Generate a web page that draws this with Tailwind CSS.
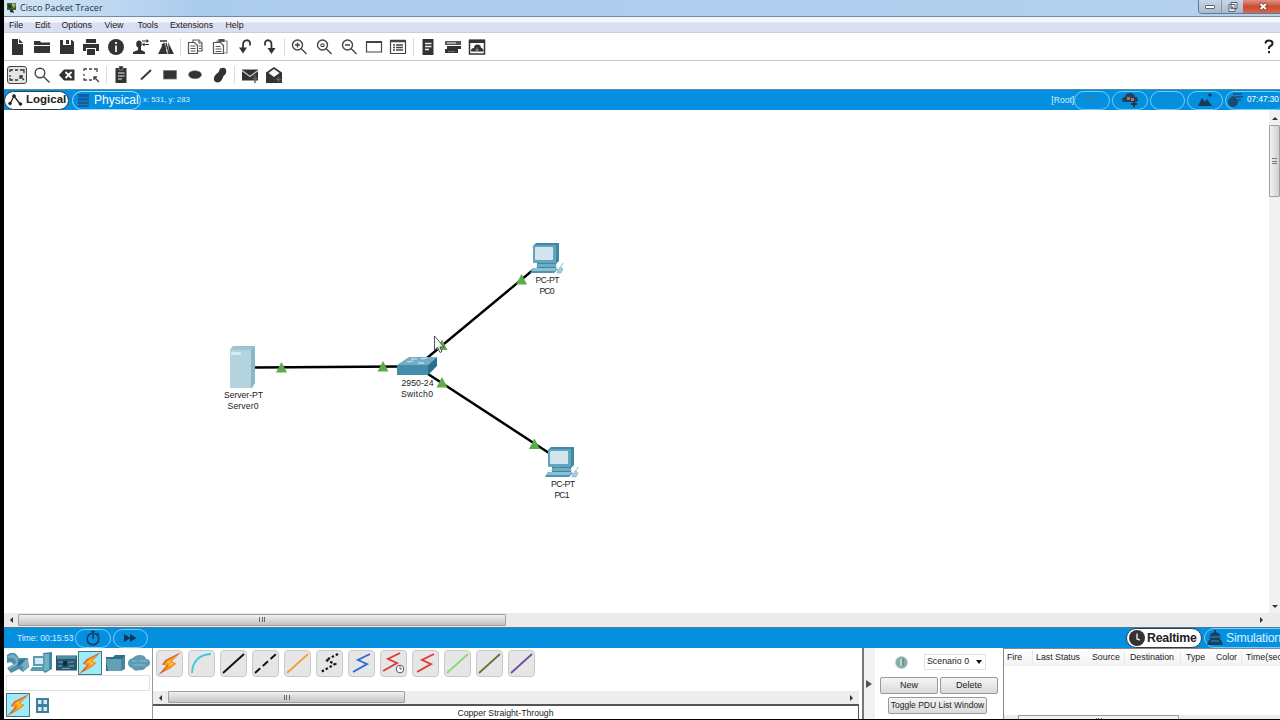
<!DOCTYPE html>
<html lang="en">
<head>
  <meta charset="UTF-8" />
  <title>Cisco Packet Tracer</title>
  <script src="https://cdn.jsdelivr.net/npm/@tailwindcss/browser@4"></script>
</head>
<body class="w-[1280px] h-[720px] overflow-hidden bg-black pl-[4px] font-['Liberation_Sans',Arial,sans-serif] text-[9px] text-[#222]">
  <!-- shared symbols -->
  <svg class="hidden">
    <symbol id="bolt" viewBox="0 0 24 24">
      <path d="M24 0 8 8l-4 5 5 1-9 10 13-7 6-5-5-2z" fill="#d9622b" />
      <path d="M20 3 9 9l-3 4 5 1-5 6 8-4 5-4-5-2z" fill="#fb9a1c" />
      <path d="m14 8-5 3 4 1-2 3 5-3-4-1z" fill="#ffd33d" />
    </symbol>
    <symbol id="pc" viewBox="0 0 34 34">
      <path d="M4 2 6 0h23v18l-3 3z" fill="#3f88a5" />
      <rect x="3" y="2" width="23" height="18" rx="1" fill="#62a5be" />
      <rect x="5" y="4" width="18" height="13" rx="1" fill="#d3e4ed" />
      <path d="M7 20h19v5H7z" fill="#3e86a3" />
      <path d="M8 21h17l2 3H6z" fill="#6caec5" />
      <path d="M3 25h23l2 1-4 4H0z" fill="#4e93b0" />
      <path d="M4 25h23l-2 3H1z" fill="#8bbfd2" />
      <path d="M29 25q4-3 4-5M28 27l3-3 2 2-2 4h-4z" fill="#a9cbd9" stroke="#8fb9cb" stroke-width=".8" />
    </symbol>
  </svg>

  <div class="flex flex-col h-[719px] bg-white">
    <!-- title bar -->
    <header class="flex h-[17px] shrink-0 items-center border-b border-[#6f8bab] bg-linear-to-r from-[#d3e6f6] via-[#acccee] via-15% to-[#b4d0ee]">
      <svg class="ml-[3px] mb-[1px] size-[11px]" viewBox="0 0 11 11"><path d="M0 1h9v7H0z" fill="#445c3c" /><path d="m1 2 4 2-3 3z" fill="#172b1b" /><path d="m5 1 4 1-2 4-2-2z" fill="#a5b34d" /><path d="m3 7 3 1 1 3-4-1z" fill="#223a2a" /></svg>
      <span class="ml-[2px] mb-[1px] flex-1 font-['Open_Sans','Noto_Sans',sans-serif] text-[9.200px] leading-[14px] text-[#26313d]">Cisco Packet Tracer</span>
      <div class="-mr-[4px] flex h-[14px] self-start overflow-hidden rounded-bl border border-t-0 border-[#66788e]">
        <div class="flex w-[23px] items-center justify-center border-r border-[#8795a8] bg-linear-to-b from-[#c9d5e3] to-[#a9bacf]"><span class="mt-[1px] h-[4px] w-[10px] rounded-[1px] border border-[#5c6775] bg-white"></span></div>
        <div class="flex w-[21px] items-center justify-center bg-linear-to-b from-[#c9d5e3] to-[#a9bacf]">
          <svg class="size-[10px]" viewBox="0 0 10 10" fill="#f5f7fa" stroke="#566172"><path d="M3 .5h6v6H3zM1 2.500h6v7H1z" /><path d="M3 5h2v2H3z" /></svg>
        </div>
        <div class="flex w-[40px] items-center justify-center bg-linear-to-b from-[#dc9484] via-[#ca4a32] via-50% to-[#d56a4b]">
          <svg class="size-[9px]" viewBox="0 0 9 9"><path d="m1 1.500 6.500 6M7.500 1.500 1 7.500" stroke="#7a4238" stroke-width="3.200" /><path d="m1.500 2 5.500 5M7 2 1.500 7" stroke="#fff" stroke-width="1.800" /></svg>
        </div>
      </div>
    </header>

    <!-- menu -->
    <nav class="flex h-[16px] shrink-0 items-center border-b border-[#cfcbd8] bg-linear-to-b from-[#f4f5fb] from-35% to-[#d9def0] to-40% pl-[5px] text-[8.800px] leading-[14px] text-[#1c1c24]">
      <span class="w-[26px]">File</span>
      <span class="w-[26.500px]">Edit</span>
      <span class="w-[43px]">Options</span>
      <span class="w-[33px]">View</span>
      <span class="w-[32.500px]">Tools</span>
      <span class="w-[55.500px]">Extensions</span>
      <span>Help</span>
    </nav>

    <!-- main toolbar -->
    <div class="flex h-[28px] shrink-0 items-center border-b border-[#c8c8c8] pl-[.6px] text-[#333]">
      <div class="grid w-[24.800px] place-items-center"><svg class="size-[18px]" viewBox="0 0 18 18" fill="currentColor"><path d="M4 1h6v5h5v11H4zM11 1l4 4h-4z" /></svg></div>
      <div class="grid w-[24.800px] place-items-center"><svg class="size-[18px]" viewBox="0 0 18 18" fill="currentColor"><path d="M1 3h6l1 1.500h9V7H1zM1 8h16v7H1z" /></svg></div>
      <div class="grid w-[24.800px] place-items-center"><svg class="size-[18px]" viewBox="0 0 18 18" fill="currentColor"><path d="M2 2h3v5h8V2h1l2 2v12H2zM8 2h3v4H8z" /></svg></div>
      <div class="grid w-[24.800px] place-items-center"><svg class="size-[18px]" viewBox="0 0 18 18" fill="currentColor"><path d="M4 1h10v4H4zM1 6h16v7h-3v-3H4v3H1zM5 11h8v6H5z" /></svg></div>
      <div class="grid w-[24.800px] place-items-center"><svg class="size-[18px]" viewBox="0 0 18 18"><circle cx="9" cy="9" r="8" fill="#333" /><path d="M8 4h2v2H8zM8 7.500h2V14H8z" fill="#ddd" /></svg></div>
      <div class="grid w-[24.800px] place-items-center"><svg class="size-[18px]" viewBox="0 0 18 18" fill="currentColor"><ellipse cx="7" cy="6" rx="2.800" ry="3.600" /><path d="M6 8h3v4l4 2v2H1v-2l5-2z" /><path d="M10 3h6M11 6.500h6" stroke="currentColor" stroke-width="1" /><path d="m14.500 1 2.500 2-2.500 2zM12.500 4.500l-2.500 2 2.500 2z" /></svg></div>
      <div class="grid w-[24.800px] place-items-center"><svg class="size-[18px]" viewBox="0 0 18 18" fill="currentColor"><path d="M7 4 1 16h8V9zM11 4l6 12h-5z" /><path d="M3 3h7M9 5l3 11M5 6l5 10" stroke="currentColor" stroke-width="1.400" /><path d="M9 9l2 6" stroke="#aaa" /></svg></div>
      <div class="mx-[1.850px] h-[18px] w-px bg-[#dcdcdc]"></div>
      <div class="grid w-[24.800px] place-items-center"><svg class="size-[18px]" viewBox="0 0 18 18" fill="#fff" stroke="#555" stroke-width="1.200"><path d="M7 2h6l3 3v8H7z" /><path d="M2.500 4.500h6l3 3v8h-9z" /><path d="M4.500 8h5M4.500 10.500h5M4.500 13h5M13 2v3h3M13 8h2M13 10.500h2" /></svg></div>
      <div class="grid w-[24.800px] place-items-center"><svg class="size-[18px]" viewBox="0 0 18 18" fill="#fff" stroke="#555" stroke-width="1.200"><path d="M6 3h10v12H6z" stroke="#888" /><path d="M2.500 4.500h7l3 3v8h-10z" /><path d="M4.500 8.500h5M4.500 11h6M4.500 13.500h6" /><path d="M8 1.500h5v2H8z" fill="#555" /></svg></div>
      <div class="grid w-[24.800px] place-items-center"><svg class="size-[18px]" viewBox="0 0 18 18"><path d="M7 11V7c0-3 1.500-4.500 3.500-4.700C13 2 15 4 13.800 7.500" fill="none" stroke="#333" stroke-width="1.800" /><path d="M3 9.500h8l-4 6z" fill="#333" /></svg></div>
      <div class="grid w-[24.800px] place-items-center"><svg class="size-[18px]" viewBox="0 0 18 18"><path d="M4.200 7.500C3 4 5 2 7.500 2.300 9.500 2.500 10.500 4.500 10.500 7v4" fill="none" stroke="#333" stroke-width="1.800" /><path d="M6.500 10h8l-4 6z" fill="#333" /></svg></div>
      <div class="mx-[1.850px] h-[18px] w-px bg-[#dcdcdc]"></div>
      <div class="grid w-[24.800px] place-items-center"><svg class="size-[18px]" viewBox="0 0 18 18" fill="none" stroke="#444" stroke-width="1.400"><circle cx="7.500" cy="7" r="5" /><path d="m11 10.500 5.500 5.500M5 7h5M7.500 4.500v5" /></svg></div>
      <div class="grid w-[24.800px] place-items-center"><svg class="size-[18px]" viewBox="0 0 18 18" fill="none" stroke="#444" stroke-width="1.400"><circle cx="7.500" cy="7" r="5" /><path d="m11 10.500 5.500 5.500" /><path d="M6 6h3v2.500H6z" stroke-width="1" /></svg></div>
      <div class="grid w-[24.800px] place-items-center"><svg class="size-[18px]" viewBox="0 0 18 18" fill="none" stroke="#444" stroke-width="1.400"><circle cx="7.500" cy="7" r="5" /><path d="m11 10.500 5.500 5.500M5 7h5" /></svg></div>
      <div class="grid w-[24.800px] place-items-center"><svg class="size-[18px]" viewBox="0 0 18 18" fill="none" stroke="#444" stroke-width="1.200"><path d="M1.500 4h15v10h-15z" /><path d="M1 4h16" stroke-width="2" /></svg></div>
      <div class="grid w-[24.800px] place-items-center"><svg class="size-[18px]" viewBox="0 0 18 18" fill="none" stroke="#444" stroke-width="1.200"><path d="M1.500 3h15v12.500h-15z" /><path d="M1 3h16" stroke-width="2.500" /><path d="M4 7h2M7 7h7M4 9.500h2M7 9.500h7M4 12h2M7 12h7" stroke-width="1.500" /></svg></div>
      <div class="mx-[1.850px] h-[18px] w-px bg-[#dcdcdc]"></div>
      <div class="grid w-[24.800px] place-items-center"><svg class="size-[18px]" viewBox="0 0 18 18"><path d="M3.500 1h11v16h-11z" fill="#333" /><path d="M6 5.500h6.500M6 8.500h6.500M6 11.500h4" stroke="#eee" stroke-width="1.300" /></svg></div>
      <div class="grid w-[24.800px] place-items-center"><svg class="size-[18px]" viewBox="0 0 18 18"><path d="M1 3h16v4H1z" fill="#555" /><path d="M3 8h14v3H3zM1 11h13v4H1z" fill="#333" /><path d="M3 5h9" stroke="#ddd" stroke-width="1.200" /><path d="M4 13.500h7" stroke="#888" stroke-width=".7" /></svg></div>
      <div class="grid w-[24.800px] place-items-center"><svg class="size-[18px]" viewBox="0 0 18 18"><path d="M1.500 2.500h15v13.500h-15z" fill="#fff" stroke="#333" stroke-width="1.500" /><path d="M1 1.500h16V5H1zM3 13.500Q2.500 10 6 10q0-3.500 3.500-3.500T13 10q2.500 0 2.500 3.500z" fill="#333" /><path d="M9 9.500v3.500M7.500 11.500 9 13l1.500-1.500" stroke="#999" fill="none" /></svg></div>
      <svg class="mr-[6px] ml-auto h-[15px] w-[10px]" viewBox="0 0 10 15"><path d="M1.500 4.500Q1.500 1.500 5 1.500T8.500 4.500Q8.500 6 6.500 7T5 10" fill="none" stroke="#222" stroke-width="2" /><path d="M4 12h2v2.200H4z" fill="#222" /></svg>
    </div>

    <!-- drawing toolbar -->
    <div class="flex h-[28px] shrink-0 items-center pl-[.6px] text-[#333]">
      <div class="grid w-[24.800px] place-items-center"><svg class="h-[18px] w-[20px] rounded-[3px] border border-[#444] bg-[#e4e4e4]" viewBox="0 0 18 16" fill="none" stroke="#333" stroke-width="1.300"><path d="M2 5V3h3M7 3h3M12 3h4v3M2 8v2M2 11v2h3M7 13h3M16 13l-4-4M12 12V9h3" /></svg></div>
      <div class="grid w-[24.800px] place-items-center"><svg class="size-[18px]" viewBox="0 0 18 18" fill="none" stroke="#444" stroke-width="1.400"><circle cx="7" cy="7" r="4.800" /><path d="m10.500 10.500 6 6" /></svg></div>
      <div class="grid w-[24.800px] place-items-center"><svg class="size-[18px]" viewBox="0 0 18 18"><path d="m1 9 5-5.500h10.500v11H6z" fill="#333" /><path d="m7.500 6 6 6m0-6-6 6" stroke="#fff" stroke-width="1.800" /></svg></div>
      <div class="grid w-[24.800px] place-items-center"><svg class="size-[18px]" viewBox="0 0 18 18" fill="none" stroke="#444" stroke-width="1.300"><path d="M2 5V3h3M7 3h3M12 3h3v3M2 8v2M2 12v2h3M7 14h3M17 16l-5-5M12 14v-3h3" /></svg></div>
      <div class="mx-[1.850px] h-[18px] w-px bg-[#dcdcdc]"></div>
      <div class="grid w-[24.800px] place-items-center"><svg class="size-[18px]" viewBox="0 0 18 18"><path d="M3.500 2h11v15h-11z" fill="#333" /><path d="M7 0h4v4H7z" fill="#333" stroke="#aaa" stroke-width=".6" /><path d="M6 7h6.500M6 10h6.500M6 13h4" stroke="#eee" stroke-width="1.200" /></svg></div>
      <div class="grid w-[24.800px] place-items-center"><svg class="size-[18px]" viewBox="0 0 18 18"><path d="M4 13.500 14 4" stroke="#333" stroke-width="1.800" /></svg></div>
      <div class="grid w-[24.800px] place-items-center"><svg class="size-[18px]" viewBox="0 0 18 18"><path d="M2.500 4.500h13v8.500h-13z" fill="#333" stroke="#777" stroke-width=".8" /></svg></div>
      <div class="grid w-[24.800px] place-items-center"><svg class="size-[18px]" viewBox="0 0 18 18"><ellipse cx="9" cy="8.700" rx="6.500" ry="4" fill="#333" stroke="#777" stroke-width=".6" /></svg></div>
      <div class="grid w-[24.800px] place-items-center"><svg class="size-[18px]" viewBox="0 0 18 18"><path d="M9 2.500q5-2 6 1 1 4-2 6-1 1-1.500 3-1.500 4-5.500 4-4-1-3-5 1-3 3-4 2-1 3-5z" fill="#333" /></svg></div>
      <div class="mx-[1.850px] h-[18px] w-px bg-[#dcdcdc]"></div>
      <div class="grid w-[24.800px] place-items-center"><svg class="size-[18px]" viewBox="0 0 18 18"><path d="M1 3.500h16v11H1z" fill="#333" /><path d="m1 4.500 8 6 8-6" fill="none" stroke="#ccc" stroke-width="1.200" /><path d="M14 9v8M11.500 12.500h5" stroke="#666" stroke-width="1.500" /></svg></div>
      <div class="grid w-[24.800px] place-items-center"><svg class="size-[18px]" viewBox="0 0 18 18"><path d="m9 1 8 5.500V17H1V6.500z" fill="#333" /><path d="m9 3 5.500 4L9 11 3.500 7z" fill="#f6f6f6" /><path d="M13.500 11v5M11 13.500h5" stroke="#666" stroke-width="1.300" /></svg></div>
    </div>

    <!-- workspace bar -->
    <div class="flex h-[21px] shrink-0 items-center border-t border-[#4f8cae] bg-[#0590df] text-[8.200px] text-white">
      <div class="flex h-[19px] w-[65px] items-center rounded-full border border-[#2d3e4a] bg-white text-[11.500px] font-bold text-[#222]">
        <svg class="mr-[3px] ml-[2px] size-[16px] shrink-0" viewBox="0 0 16 16" fill="#222" stroke="#222"><path d="m3 12 4-8 6 8" fill="none" stroke-width="1.300" /><circle cx="3" cy="11.500" r="1.300" /><circle cx="7" cy="4" r="1.300" /><circle cx="13.500" cy="12" r="1.300" /></svg>
        <span>Logical</span>
      </div>
      <div class="ml-[3px] flex h-[19px] w-[69px] items-center rounded-full border border-[#9ddcff] text-[12px]">
        <svg class="ml-[4px] mr-[4px] size-[13px] shrink-0" viewBox="0 0 13 13"><path d="M1 0h11v13H1z" fill="#145f9b" /><path d="M1 3.500h11M1 7h11M1 10.500h11" stroke="#0a85cc" /></svg>
        <span>Physical</span>
      </div>
      <span class="ml-[2px] text-[7.800px] text-[#d4efff]">x: 531, y: 283</span>
      <span class="ml-auto text-[8.600px] text-[#d4efff]">[Root]</span>
      <div class="flex gap-[2px]">
        <div class="grid h-[19px] w-[35.700px] place-items-center rounded-full border border-[#73cdfb]"><svg class="h-[12px] w-[16px]" viewBox="0 0 16 12"><path d="M1 3.500 4 1v5zM4 3.500h7q2 0 2 3v3" stroke="#477fa4" fill="none" /></svg></div>
        <div class="grid h-[19px] w-[35.700px] place-items-center rounded-full border border-[#73cdfb]"><svg class="h-[14px] w-[16px]" viewBox="0 0 16 14"><path d="M0 7q0-3 3-3 1-4 5-4t5 4q3 0 3 3 0 2-2 2H2q-2 0-2-2z" fill="#283d4f" /><path d="M5 4h3v3H5zM9 5h3v3H9z" fill="#9a7778" /><path d="M12 8v6M9 11h6" stroke="#263340" stroke-width="2" /></svg></div>
        <div class="grid h-[19px] w-[35.700px] place-items-center rounded-full border border-[#73cdfb]"><svg class="size-[12px]" viewBox="0 0 12 12"><path d="M1 3h3M8 3h3M5 6h2M1 9h3M8 9h3" stroke="#297fae" /></svg></div>
        <div class="grid h-[19px] w-[35.700px] place-items-center rounded-full border border-[#73cdfb]"><svg class="h-[14px] w-[16px]" viewBox="0 0 16 14"><path d="m1 13 4-8 3 4 2-3 5 7z" fill="#193a56" /><circle cx="13" cy="2" r="1.800" fill="#193a56" /></svg></div>
        <div class="-mr-[6px] flex h-[19px] w-[61px] items-center rounded-full border border-[#73cdfb]"><svg class="ml-[1px] mr-[4px] size-[16px] shrink-0" viewBox="0 0 16 16"><circle cx="6" cy="10" r="5" fill="#1b4c70" /><path d="M4 5h12M6 2h9M11 8h3" stroke="#1b4c70" stroke-width="1.700" /></svg><span>07:47:30</span></div>
      </div>
    </div>

    <!-- logical workspace -->
    <div class="flex h-[503px] shrink-0">
      <svg class="h-[503px] w-[1265px]" viewBox="4 110 1265 503" font-family="Liberation Sans, Arial, sans-serif" font-size="8.700" text-anchor="middle" fill="#222">
        <g stroke="#000" stroke-width="2.400">
          <path d="M255 367.500 400 366.500M427 358 533 270M428 374 549 453" />
        </g>
        <!-- server -->
        <path d="M230 350l3-4h22v37l-3 5h-22z" fill="#8ab7ca" />
        <path d="M230 350h21v38h-21z" fill="#b3d3df" /><path d="m230 350 3-3.500h22l-4 3.500z" fill="#9fc5d4" /><path d="M231 352h10v3h-10z" fill="#d8eaf1" />
        <!-- switch -->
        <path d="M397 365h31v10h-31z" fill="#438cac" /><path d="m397 365 12-8h28l-9 8z" fill="#75aec4" /><path d="m428 365 9-8v9l-9 9z" fill="#286f90" /><path d="m407 362 6-1m-2-2h6m1 4h6m-3-4 6-1" stroke="#d6edf5" />
        <use href="#pc" x="530" y="243" width="34" height="34" />
        <use href="#pc" x="545" y="447" width="34" height="34" />
        <!-- link lights -->
        <path d="m281.500 362 5.500 10.500h-11zM383 361l5.500 10.500h-11zM442 339.500l5.500 10.500h-11zM442 377l5.500 10.500h-11zM521.500 274l5.500 10.500h-11zM534.500 438.500l5.500 10.500h-11z" fill="#5cab4c" />
        <path d="M434.500 336v14l3-2.500 2.500 5 2-1-2-4.500h4z" fill="#fff" fill-opacity=".75" stroke="#444" stroke-width=".9" />
        <text x="243.500" y="397.500" textLength="39">Server-PT</text><text x="243" y="408.500" textLength="31">Server0</text>
        <text x="417.500" y="385.500" textLength="32">2950-24</text><text x="417" y="396.500" textLength="32">Switch0</text>
        <text x="547.500" y="283" textLength="24">PC-PT</text><text x="547" y="294" textLength="15">PC0</text>
        <text x="563" y="486.500" textLength="24">PC-PT</text><text x="562" y="497.500" textLength="15">PC1</text>
      </svg>
      <div class="flex w-[11px] flex-col items-center bg-[#f1f1f1]">
        <svg class="mt-[5px] mb-[4px] h-[6px] w-[6px] shrink-0" viewBox="0 0 6 6"><path d="m0 5 3-3 3 3z" fill="#333" /></svg>
        <div class="grid h-[72px] w-[11px] shrink-0 place-items-center rounded-[1px] border border-[#a0a0a0] bg-linear-to-r from-[#f3f3f3] to-[#cfcfcf]"><div class="h-[6px] w-[5px] border-y border-[#777]"><div class="mt-[1.500px] h-px bg-[#777]"></div></div></div>
        <svg class="mt-auto mb-[4px] h-[6px] w-[6px] shrink-0" viewBox="0 0 6 6"><path d="m0 2 3 3 3-3z" fill="#333" /></svg>
      </div>
    </div>
    <div class="flex h-[14px] shrink-0 items-center bg-[#ebebeb]">
      <svg class="mx-[4px] size-[6px]" viewBox="0 0 6 6"><path d="M5 0v6L2 3z" fill="#333" /></svg>
      <div class="mb-[1px] grid h-[12px] w-[488px] place-items-center rounded-[1px] border border-[#a0a0a0] bg-linear-to-b from-[#f2f2f2] to-[#c0c0c0]"><div class="flex gap-[1.500px]"><i class="h-[5px] w-px bg-[#666]"></i><i class="h-[5px] w-px bg-[#666]"></i><i class="h-[5px] w-px bg-[#666]"></i></div></div>
      <svg class="mr-[15px] ml-auto size-[6px]" viewBox="0 0 6 6"><path d="M1 0v6l3-3z" fill="#333" /></svg>
    </div>

    <!-- time bar -->
    <div class="flex h-[21px] shrink-0 items-center border-t border-[#4f7b96] bg-[#0590df] pl-[13px] text-[#d9f1ff]">
      <span class="w-[58px] text-[8.500px] whitespace-nowrap">Time: 00:15:53</span>
      <div class="grid h-[19px] w-[35.500px] place-items-center rounded-full border border-[#73cdfb]"><svg class="size-[16px]" viewBox="0 0 16 16" fill="none" stroke="#143f60" stroke-width="1.600"><circle cx="8" cy="9" r="5.800" /><path d="M6 1.500h4M8 2v7M12 3l2 2" /></svg></div>
      <div class="ml-[2px] grid h-[19px] w-[35.500px] place-items-center rounded-full border border-[#73cdfb]"><svg class="h-[10px] w-[13px]" viewBox="0 0 13 10" fill="#133752"><path d="m0 1 6.500 4L0 9zM6 1l6.500 4L6 9z" /></svg></div>
      <div class="ml-auto flex h-[20px] w-[76px] items-center rounded-full border border-[#2d3e4a] bg-white text-[12.300px] font-bold text-[#222]"><svg class="mr-[2px] ml-[2px] size-[16px] shrink-0" viewBox="0 0 16 16"><circle cx="8" cy="8" r="8" fill="#333" /><path d="M8 3.500V9l3 1" fill="none" stroke="#ddd" stroke-width="1.500" /></svg><span class="tracking-[-.2px]">Realtime</span></div>
      <div class="-mr-[8px] ml-[2px] flex h-[20px] w-[84px] items-center rounded-full border border-[#73cdfb] text-[12.300px]"><svg class="mr-[3px] ml-[2px] size-[16px] shrink-0" viewBox="0 0 16 16"><circle cx="8" cy="7.500" r="5.500" fill="#18415f" /><path d="M0 15 2 10h12l2 5z" fill="#18415f" /><path d="M3 7h10M4 11h8" stroke="#3c91c0" /><path d="M8 0v3" stroke="#18415f" stroke-width="2" /></svg><span class="tracking-[-.25px]">Simulation</span></div>
    </div>

    <div class="flex h-[71px] shrink-0">
      <!-- device categories -->
      <div class="flex w-[149px] flex-col border-r border-[#999] pt-[3px] pl-[2px]">
        <div class="flex h-[24px] w-[146px]">
          <svg class="size-[24px]" viewBox="0 0 24 24"><path d="M1 4q5-4 9-1l3 4h9l1 9-6 5-4-3-8 4-4-5 7-3-3-3-4 1z" fill="#4d8eaa" /><path d="m2 5 5-2 5 4v5l9-4 1 0v8l-5 4v-5l-6-1-7 4-2-2 8-4q0-6-8-5z" fill="#76afc4" /><path d="m13 9 7-1-5 6-4 1z" fill="#2f7190" /></svg>
          <svg class="size-[24px]" viewBox="0 0 24 24"><path d="m13 2 9-1v17l-7 4-3-3z" fill="#3f87a5" /><path d="M13 3h6v16l-5 1z" fill="#76afc4" /><path d="M3 5h12v10H3z" fill="#5a9db7" /><path d="M5 7h8v6H5z" fill="#d8e8ef" /><path d="M2 16h13l-2 4H0z" fill="#5b9cb5" /></svg>
          <svg class="size-[24px]" viewBox="0 0 24 24"><path d="M2 4.500h21v15H2z" fill="#28566c" /><path d="M3 5h19v3H3z" fill="#4a8dab" /><path d="M4 11h5M4 15h4M14 11h6M15 15h5M8 17.500h8" stroke="#6aa7c0" stroke-width="1.100" /><path d="M9 10h4v5H9z" fill="#132d3b" /></svg>
          <div class="grid size-[24px] place-items-center border border-[#477786] bg-[#9debf7]"><svg class="size-[22px]"><use href="#bolt" /></svg></div>
          <svg class="ml-[1px] size-[24px]" viewBox="0 0 24 24"><path d="M3 6h7l2-2h10v14l-5 2H3z" fill="#2f718c" /><path d="M3 8h15v12H5z" fill="#65a0b6" /><path d="m18 8 4-3v12l-4 3z" fill="#48849c" /></svg>
          <svg class="size-[24px]" viewBox="0 0 24 24"><path d="M6 7q2-3 7-3t6 4q4 0 4 4 0 3-4 4-2 4-7 3-4 2-7-2-4-1-4-5t5-5z" fill="#5d9ab4" /><path d="M5 10h5M12 10h8M6 14h12" stroke="#8dbfd0" /></svg>
        </div>
        <div class="h-[16px] w-[144px] border border-[#e0e0e0]"></div>
        <div class="mt-[2px] flex h-[24px] items-center">
          <div class="grid size-[24px] place-items-center border border-[#477786] bg-[#9debf7]"><svg class="size-[22px]"><use href="#bolt" /></svg></div>
          <svg class="ml-[6px] h-[15px] w-[13px]" viewBox="0 0 13 15"><path d="M0 0h13v15H0z" fill="#3c809d" /><path d="M2 2h3.500v4H2zM7.500 2H11v4H7.500zM2 9h3.500v4H2zM7.500 9H11v4H7.500z" fill="#dbeaf0" /></svg>
        </div>
      </div>

      <!-- connections -->
      <div class="flex w-[706px] flex-col">
        <div class="flex h-[43px] gap-[5px] pt-[2px] pl-[3px]">
          <div class="grid size-[27px] place-items-center rounded-[4px] border border-[#c9c9c9] bg-[#e7e6e6]"><svg class="size-[23px]"><use href="#bolt" /></svg></div>
          <div class="size-[27px] rounded-[4px] border border-[#c9c9c9] bg-[#e7e6e6]"><svg viewBox="0 0 25 25" fill="none"><path d="M3 22Q4 4 22 3" stroke="#45c6df" stroke-width="1.800" /></svg></div>
          <div class="size-[27px] rounded-[4px] border border-[#c9c9c9] bg-[#e7e6e6]"><svg viewBox="0 0 25 25" fill="none"><path d="M2 22 23 3" stroke="#111" stroke-width="2" /></svg></div>
          <div class="size-[27px] rounded-[4px] border border-[#c9c9c9] bg-[#e7e6e6]"><svg viewBox="0 0 25 25" fill="none"><path d="M2 22 23 3" stroke="#111" stroke-width="2" stroke-dasharray="7 3.500" /></svg></div>
          <div class="size-[27px] rounded-[4px] border border-[#c9c9c9] bg-[#e7e6e6]"><svg viewBox="0 0 25 25" fill="none"><path d="M2 22 23 3" stroke="#eba23c" stroke-width="1.800" /></svg></div>
          <div class="size-[27px] rounded-[4px] border border-[#c9c9c9] bg-[#e7e6e6]"><svg viewBox="0 0 25 25" fill="none"><path d="M21 3 9 9l9 4L4 21" stroke="#111" stroke-width="2.200" stroke-dasharray="2.500 2" /></svg></div>
          <div class="size-[27px] rounded-[4px] border border-[#c9c9c9] bg-[#e7e6e6]"><svg viewBox="0 0 25 25" fill="none"><path d="M21 3 9 9l9 4L4 21" stroke="#2b6bd4" stroke-width="1.900" /></svg></div>
          <div class="size-[27px] rounded-[4px] border border-[#c9c9c9] bg-[#e7e6e6]"><svg viewBox="0 0 25 25" fill="none"><path d="M19 2 7 8l9 4L2 20" stroke="#e03a34" stroke-width="1.900" /><circle cx="19" cy="18" r="3.800" fill="#fff" stroke="#555" /><path d="M19 15.500V18h2" stroke="#555" /></svg></div>
          <div class="size-[27px] rounded-[4px] border border-[#c9c9c9] bg-[#e7e6e6]"><svg viewBox="0 0 25 25" fill="none"><path d="M21 3 9 9l9 4L4 21" stroke="#e03a34" stroke-width="1.900" /></svg></div>
          <div class="size-[27px] rounded-[4px] border border-[#c9c9c9] bg-[#e7e6e6]"><svg viewBox="0 0 25 25" fill="none"><path d="M2 22 23 3" stroke="#86dc6c" stroke-width="1.800" /></svg></div>
          <div class="size-[27px] rounded-[4px] border border-[#c9c9c9] bg-[#e7e6e6]"><svg viewBox="0 0 25 25" fill="none"><path d="M2 22 23 3" stroke="#6c6c35" stroke-width="1.800" /></svg></div>
          <div class="size-[27px] rounded-[4px] border border-[#c9c9c9] bg-[#e7e6e6]"><svg viewBox="0 0 25 25" fill="none"><path d="M2 22 23 3" stroke="#6a4fa5" stroke-width="1.800" /></svg></div>
        </div>
        <div class="flex h-[13px] items-center bg-[#ededed]">
          <svg class="mx-[4px] size-[6px]" viewBox="0 0 6 6"><path d="M5 0v6L2 3z" fill="#333" /></svg>
          <div class="mb-[1px] ml-[1px] grid h-[12px] w-[237px] place-items-center rounded-[1px] border border-[#a0a0a0] bg-linear-to-b from-[#f2f2f2] to-[#c4c4c4]"><div class="flex gap-[1.500px]"><i class="h-[5px] w-px bg-[#666]"></i><i class="h-[5px] w-px bg-[#666]"></i><i class="h-[5px] w-px bg-[#666]"></i></div></div>
          <svg class="mr-[4px] ml-auto size-[6px]" viewBox="0 0 6 6"><path d="M1 0v6l3-3z" fill="#333" /></svg>
        </div>
        <div class="flex-1 border-t-2 border-r border-[#555] pt-[1px] text-center text-[8.700px] leading-[12px]">Copper Straight-Through</div>
      </div>

      <!-- scenario -->
      <div class="ml-[3px] flex w-[13px] items-center border-l-2 border-[#777] bg-[#f2f2f2]"><svg class="ml-[2px] h-[8px] w-[6px]" viewBox="0 0 6 8"><path d="m0 0 6 4-6 4z" fill="#555" /></svg></div>
      <div class="flex w-[128px] flex-col pt-[5px] pl-[5px]">
        <div class="flex h-[18px] items-center gap-[16px] pl-[15px]">
          <svg class="size-[13px]" viewBox="0 0 13 13"><circle cx="6.500" cy="6.500" r="6" fill="#83aca4" stroke="#bfcdd0" stroke-width=".7" /><path d="M5 3h2v7H5z" fill="#b9d6cf" /><path d="M8 3v7" stroke="#587f7a" /></svg>
          <div class="flex h-[16px] w-[62px] items-center border border-[#e2e2e2] pl-[2px]"><span class="flex-1 text-[8.800px] whitespace-nowrap">Scenario 0</span><svg class="mr-[3px] h-[4px] w-[6px]" viewBox="0 0 6 4"><path d="M0 0h6L3 4z" fill="#111" /></svg></div>
        </div>
        <div class="mt-[6px] flex gap-[2px]">
          <button class="h-[17px] w-[58px] rounded-[2px] border border-[#999] bg-linear-to-b from-[#f5f5f5] to-[#dadada]">New</button>
          <button class="h-[17px] w-[58px] rounded-[2px] border border-[#999] bg-linear-to-b from-[#f5f5f5] to-[#dadada]">Delete</button>
        </div>
        <button class="mt-[3px] ml-[8px] h-[17px] w-[99px] rounded-[2px] border border-[#999] bg-linear-to-b from-[#f5f5f5] to-[#dadada] text-[8.500px] whitespace-nowrap">Toggle PDU List Window</button>
      </div>

      <!-- pdu list -->
      <div class="flex flex-1 flex-col overflow-hidden border-t border-l border-[#888]">
        <div class="flex h-[17px] shrink-0 items-center border-b border-[#eee] bg-linear-to-b from-white to-[#f3f3f3] pt-[2px] text-[8.800px] whitespace-nowrap">
          <span class="w-[29px] shrink-0 border-r border-[#e8e8e8] pl-[3px]">Fire</span>
          <span class="w-[56px] shrink-0 pl-[3px]">Last Status</span>
          <span class="w-[36px] shrink-0 border-r border-[#e8e8e8] pl-[3px]">Source</span>
          <span class="w-[56px] shrink-0 border-r border-[#e8e8e8] pl-[5px]">Destination</span>
          <span class="w-[31px] shrink-0 pl-[5px]">Type</span>
          <span class="w-[30px] shrink-0 border-r border-[#e8e8e8] pl-[4px]">Color</span>
          <span class="shrink-0 pl-[4px]">Time(sec)</span>
        </div>
        <div class="mt-auto flex h-[4px] shrink-0 bg-[#ececec] pl-[14px]"><div class="flex w-[161px] items-end justify-center gap-[1.500px] border border-b-0 border-[#999] bg-[#f2f2f2]"><i class="h-px w-px bg-[#666]"></i><i class="h-px w-px bg-[#666]"></i><i class="h-px w-px bg-[#666]"></i></div></div>
      </div>
    </div>
  </div>
</body>
</html>
